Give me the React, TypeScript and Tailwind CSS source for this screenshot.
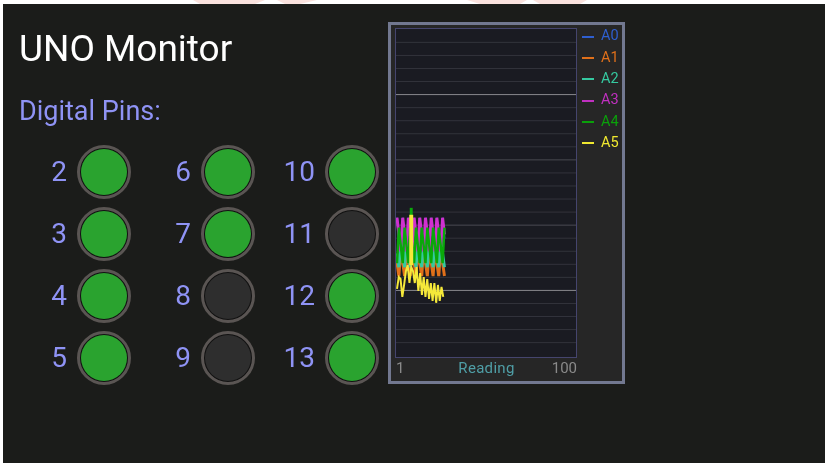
const pins = [
  { n: 2, on: true },
  { n: 6, on: true },
  { n: 10, on: true },
  { n: 3, on: true },
  { n: 7, on: true },
  { n: 11, on: false },
  { n: 4, on: true },
  { n: 8, on: false },
  { n: 12, on: true },
  { n: 5, on: true },
  { n: 9, on: false },
  { n: 13, on: true },
];

const legend = [
  { name: 'A0', color: 'bg-[#2f5fd0]', text: 'text-[#2f5fd0]' },
  { name: 'A1', color: 'bg-[#e0701a]', text: 'text-[#e0701a]' },
  { name: 'A2', color: 'bg-[#35c9a0]', text: 'text-[#35c9a0]' },
  { name: 'A3', color: 'bg-[#c030c0]', text: 'text-[#c030c0]' },
  { name: 'A4', color: 'bg-[#0aa00a]', text: 'text-[#0aa00a]' },
  { name: 'A5', color: 'bg-[#f0e830]', text: 'text-[#f0e830]' },
];

// triangle wave, y coords inside the plot (plot top = 0)
const wave = (hi: number, lo: number, phase: number) => {
  const pts: string[] = [];
  for (let i = 0; i < 26; i++) {
    const x = 1 + i * 1.92;
    const y = (i + phase) % 3 === 0 ? hi : (i + phase) % 3 === 1 ? (hi + lo) / 2 : lo;
    pts.push(`${x.toFixed(1)},${y}`);
  }
  return pts.join(' ');
};

const a5 =
  '1,262 2.8,250 4.6,252 6.4,270 8.2,258 10,244 11.8,238 13.6,256 15.4,240 17.2,244 19,256 20.8,240 22.6,264 24.4,246 26.2,268 28,250 29.8,270 31.6,252 33.4,272 35.2,256 37,274 38.8,256 40.6,276 42.4,258 44.2,274 46,260 47.8,270';

function Pin({ n, on }: { n: number; on: boolean }) {
  return (
    <div className="flex h-[62px] items-center justify-end gap-[10px]">
      <span className="text-[28px] leading-none text-[#8f93f5]">{n}</span>
      <div className="flex h-[54px] w-[54px] items-center justify-center rounded-full border-[3px] border-[#5a5553] bg-[#111111]">
        <div
          className={
            on
              ? 'h-[46px] w-[46px] rounded-full bg-[#2aa32f]'
              : 'h-[46px] w-[46px] rounded-full bg-[#2e2e2e]'
          }
        />
      </div>
    </div>
  );
}

function Plot() {
  const lines = Array.from({ length: 24 }, (_, i) => i + 1);
  return (
    <svg width="182" height="330" viewBox="0 0 182 330" className="block border border-[#45456e] bg-[#1a1b22]">
      {lines.map((i) => {
        const major = i % 5 === 0;
        const bright = i === 5 || i === 20;
        return (
          <line
            key={i}
            x1="0"
            x2="182"
            y1={i * 13.2 - 0.5}
            y2={i * 13.2 - 0.5}
            stroke={bright ? '#8a8a8e' : major ? '#4a4a52' : '#33343c'}
            strokeWidth="1"
          />
        );
      })}
      <polyline points={wave(190, 232, 0)} fill="none" stroke="#2f5fd0" strokeWidth="2" />
      <polyline points={wave(222, 249, 1)} fill="none" stroke="#e0701a" strokeWidth="3" />
      <polyline points={wave(212, 240, 1)} fill="none" stroke="#35c9a0" strokeWidth="3" />
      <polyline points={wave(190, 224, 0)} fill="none" stroke="#d030d0" strokeWidth="3" />
      <polyline points={wave(200, 236, 2)} fill="none" stroke="#0aa80a" strokeWidth="2.5" />
      <polyline points="15.4,180 15.4,220" fill="none" stroke="#0aa80a" strokeWidth="3" />
      <polyline points="15.4,187 15.4,238" fill="none" stroke="#f5e83a" strokeWidth="4" />
      <polyline points={a5} fill="none" stroke="#f5e83a" strokeWidth="2" />
    </svg>
  );
}

export default function App() {
  return (
    <div className="relative h-[466px] w-[828px] overflow-hidden bg-white px-[3px] pb-[3px] pt-[4px] font-['Roboto',sans-serif]">
      <svg width="828" height="4" viewBox="0 0 828 4" className="absolute left-0 top-0">
        <path d="M193 0 L265 0 L255 4 L200 4 Z M277 0 L317 0 L300 4 L285 4 Z M467 0 L527 0 L520 4 L480 4 Z M533 0 L587 0 L580 4 L540 4 Z" fill="#fae2de" />
      </svg>
      <div className="flex h-[459px] bg-[#1b1c1a] blur-[0.3px]">
        <div className="w-[385px] shrink-0">
          <h1 className="ml-[16px] mt-[24px] text-[37px] font-normal leading-[42px] text-white">UNO Monitor</h1>
          <h2 className="ml-[16px] mt-[26px] text-[27px] font-normal leading-[30px] text-[#8f93f5]">Digital Pins:</h2>
          <div className="ml-[4px] mt-[15px] grid w-[372px] grid-cols-3">
            {pins.map((p) => (
              <Pin key={p.n} n={p.n} on={p.on} />
            ))}
          </div>
        </div>
        <div className="mt-[18px] h-[362px] w-[237px] border-[3px] border-[#727890] bg-[#262626] pl-[4px] pt-[3px]">
          <div className="flex">
            <div className="w-[182px]">
              <Plot />
              <div className="grid grid-cols-[1fr_auto_1fr] items-center pl-[1px] text-[15px] leading-[20px] text-[#8a8a8a]">
                <span>1</span>
                <span className="tracking-[0.3px] text-[#4f9ea6]">Reading</span>
                <span className="text-right">100</span>
              </div>
            </div>
            <div className="-mt-[2px] ml-[5px] flex flex-col">
              {legend.map((l) => (
                <div key={l.name} className="flex h-[21.3px] items-center gap-[7px] text-[14.5px] leading-none">
                  <span className={`h-[2px] w-[12px] ${l.color}`} />
                  <span className={l.text}>{l.name}</span>
                </div>
              ))}
            </div>
          </div>
        </div>
      </div>
    </div>
  );
}
